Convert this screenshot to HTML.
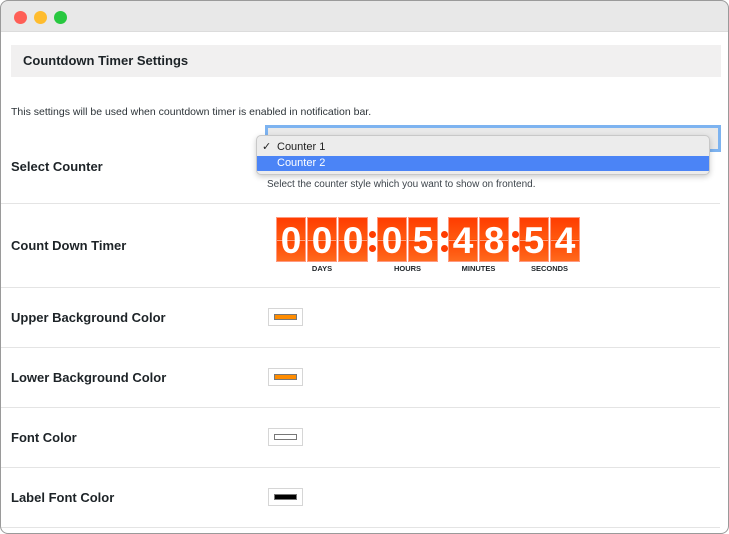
<!DOCTYPE html>
<html><head><meta charset="utf-8"><style>
*{box-sizing:border-box;margin:0;padding:0}
html,body{width:729px;height:534px;overflow:hidden;background:#fff;font-family:"Liberation Sans",Arial,sans-serif;color:#1d2327}
.win{position:absolute;left:0;top:0;width:729px;height:534px;border-radius:8px;overflow:hidden;background:#fff}
.bd{position:absolute;left:0;top:0;width:729px;height:534px;border:1px solid #9a9a9a;border-radius:8px;pointer-events:none}
.tb{position:absolute;left:0;top:0;right:0;height:32px;background:#e8e8e8;border-bottom:1px solid #dcdcdc}
.dot{position:absolute;top:11px;width:13px;height:13px;border-radius:50%}
.hdr{position:absolute;left:11px;top:45px;width:710px;height:32px;background:#f1f0f0;font-weight:bold;font-size:13px;line-height:32px;padding-left:12px;color:#1d2327}
.desc{position:absolute;left:11px;top:106px;font-size:10.5px;color:#2c3338}
.lab{position:absolute;left:11px;font-size:13px;font-weight:bold;color:#1d2327}
.sep{position:absolute;left:0;width:720px;height:1px;background:#e4e4e4}
.sw{position:absolute;left:268px;width:35px;height:18px;border:1px solid #d6d6d6;background:#fff}
.sw i{position:absolute;left:5px;top:5px;width:23px;height:6px;border:1px solid #777}
.card{position:absolute;top:217px;width:30px;height:45px;background:linear-gradient(#ff3c00,#ff5a10 50%,#ff4400 50%,#ff6a1e);color:#fff;font-weight:bold;font-size:37px;line-height:45px;text-align:center;border:1px solid #ff9a80}
.card:after{content:"";position:absolute;left:0;right:0;top:22px;height:1px;background:rgba(255,255,255,.5)}
.cd{position:absolute;width:7px;height:7px;border-radius:50%;background:#ff3c00}
.tl{position:absolute;top:264px;font-size:7.5px;font-weight:bold;color:#1d2327;text-align:center}
</style></head><body><div class="win">
<div class="tb"><div class="dot" style="left:14px;background:#fe5f57"></div><div class="dot" style="left:34px;background:#febc2e"></div><div class="dot" style="left:54px;background:#28c840"></div></div>
<div class="hdr">Countdown Timer Settings</div>
<div class="desc">This settings will be used when countdown timer is enabled in notification bar.</div>
<div style="position:absolute;left:265px;top:125px;width:456px;height:27px;border:3px solid #7db3f0;background:#e9e9e9"></div>
<div style="position:absolute;left:256px;top:135px;width:454px;height:40px;background:#ececec;border:1px solid #c8c8c8;border-radius:5px;box-shadow:0 2px 6px rgba(0,0,0,.2);overflow:hidden;font-size:11px">
<div style="height:20px;line-height:22px;padding-left:20px;color:#222;position:relative"><span style="position:absolute;left:5px">✓</span>Counter 1</div>
<div style="height:15px;line-height:15px;padding-left:20px;background:#4b84f6;color:#fff">Counter 2</div></div>
<div style="position:absolute;left:267px;top:179px;font-size:10px;color:#3c434a">Select the counter style which you want to show on frontend.</div>
<div class="lab" style="top:159px">Select Counter</div>
<div class="sep" style="top:203px"></div>
<div class="lab" style="top:238px">Count Down Timer</div>
<div class="card" style="left:276px">0</div><div class="card" style="left:307px">0</div><div class="card" style="left:338px">0</div>
<div class="cd" style="left:369px;top:231px"></div><div class="cd" style="left:369px;top:245px"></div>
<div class="card" style="left:377px">0</div><div class="card" style="left:408px">5</div>
<div class="cd" style="left:441px;top:231px"></div><div class="cd" style="left:441px;top:245px"></div>
<div class="card" style="left:448px">4</div><div class="card" style="left:479px">8</div>
<div class="cd" style="left:512px;top:231px"></div><div class="cd" style="left:512px;top:245px"></div>
<div class="card" style="left:519px">5</div><div class="card" style="left:550px">4</div>
<div class="tl" style="left:276px;width:92px">DAYS</div>
<div class="tl" style="left:377px;width:61px">HOURS</div>
<div class="tl" style="left:448px;width:61px">MINUTES</div>
<div class="tl" style="left:519px;width:61px">SECONDS</div>
<div class="sep" style="top:287px"></div>
<div class="lab" style="top:310px">Upper Background Color</div>
<div class="sw" style="top:308px"><i style="background:#ff8c00"></i></div>
<div class="sep" style="top:347px"></div>
<div class="lab" style="top:370px">Lower Background Color</div>
<div class="sw" style="top:368px"><i style="background:#ff8c00"></i></div>
<div class="sep" style="top:407px"></div>
<div class="lab" style="top:430px">Font Color</div>
<div class="sw" style="top:428px"><i style="background:#fff"></i></div>
<div class="sep" style="top:467px"></div>
<div class="lab" style="top:490px">Label Font Color</div>
<div class="sw" style="top:488px"><i style="background:#000"></i></div>
<div class="sep" style="top:527px"></div>
</div><div class="bd"></div></body></html>
